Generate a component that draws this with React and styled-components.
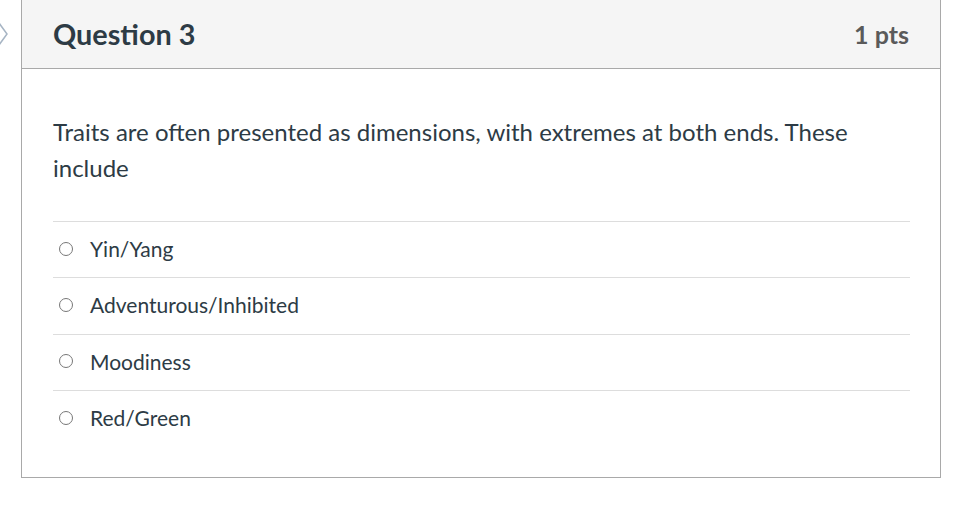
import styled, { createGlobalStyle } from 'styled-components';

const GlobalStyle = createGlobalStyle`
  body {
    margin: 0;
    background: #ffffff;
    font-family: Lato, "Open Sans", sans-serif;
  }
`;

const Page = styled.div`
  display: flex;
  align-items: flex-start;
`;

const Gutter = styled.div`
  width: 21px;
  flex-shrink: 0;
  padding-top: 21px;
`;

const Card = styled.div`
  width: 918px;
  border: 1px solid #a9a9a9;
  border-top: none;
  background: #fff;
`;

const Header = styled.div`
  display: flex;
  align-items: center;
  justify-content: space-between;
  height: 68px;
  padding: 0 31px 0 31px;
  background: #f5f5f5;
  border-bottom: 1px solid #a9a9a9;
`;

const Title = styled.h2`
  margin: 0;
  font-size: 28.8px;
  font-weight: 700;
  color: #2d3b45;
`;

const Points = styled.span`
  font-size: 25px;
  font-weight: 700;
  color: #5a5a5a;
`;

const Body = styled.div`
  padding: 45px 30px 31px 31px;
`;

const Prompt = styled.p`
  margin: 0 0 35px;
  font-size: 24px;
  line-height: 36px;
  color: #2d3b45;
`;

const Answers = styled.div`
  display: flex;
  flex-direction: column;
`;

const Answer = styled.label`
  box-sizing: border-box;
  display: flex;
  align-items: center;
  gap: 17px;
  height: 56.33px;
  padding: 0 0 2px 6px;
  border-top: 1px solid #dddddd;
  font-size: 21px;
  color: #2d3b45;
  cursor: pointer;
`;

const Radio = styled.span`
  width: 12px;
  height: 12px;
  border: 1px solid #777777;
  border-radius: 50%;
  flex-shrink: 0;
`;

const options = ['Yin/Yang', 'Adventurous/Inhibited', 'Moodiness', 'Red/Green'];

export default function App() {
  return (
    <Page>
      <GlobalStyle />
      <Gutter>
        <svg width="10" height="26" viewBox="0 0 10 26">
          <path d="M-1 2 L7 13 L-1 24" fill="none" stroke="#a7b5c4" strokeWidth="1.5" />
        </svg>
      </Gutter>
      <Card>
        <Header>
          <Title>Question 3</Title>
          <Points>1 pts</Points>
        </Header>
        <Body>
          <Prompt>
            Traits are often presented as dimensions, with extremes at both ends. These include
          </Prompt>
          <Answers>
            {options.map((o) => (
              <Answer key={o}>
                <Radio />
                {o}
              </Answer>
            ))}
          </Answers>
        </Body>
      </Card>
    </Page>
  );
}
